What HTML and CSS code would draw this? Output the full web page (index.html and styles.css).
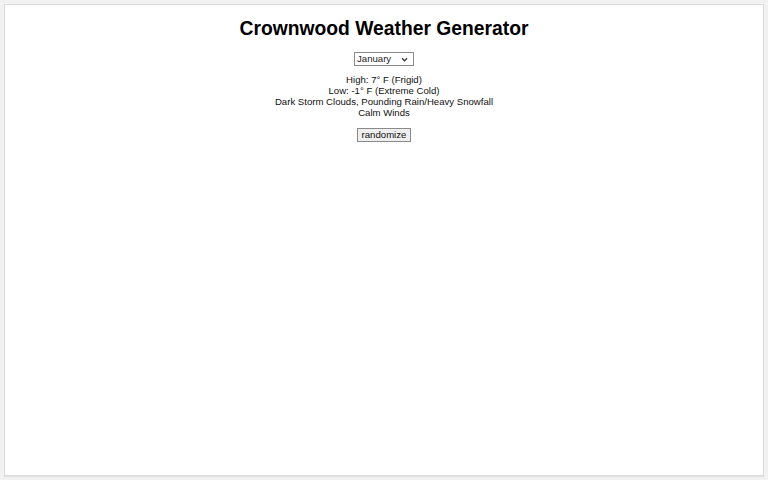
FILE: index.html
```html
<!DOCTYPE html>
<html>
<head>
<meta charset="utf-8">
<link rel="stylesheet" href="styles.css">
</head>
<body>
<div class="panel">
  <h1 class="title">Crownwood Weather Generator</h1>
  <select class="month">
    <option>January</option>
    <option>February</option>
    <option>March</option>
    <option>April</option>
    <option>May</option>
    <option>June</option>
    <option>July</option>
    <option>August</option>
    <option>September</option>
    <option>October</option>
    <option>November</option>
    <option>December</option>
  </select>
  <div class="report">
    <div>High: 7° F (Frigid)</div>
    <div>Low: -1° F (Extreme Cold)</div>
    <div>Dark Storm Clouds, Pounding Rain/Heavy Snowfall</div>
    <div>Calm Winds</div>
  </div>
  <button class="randomize">randomize</button>
</div>
</body>
</html>
```
FILE: styles.css
```css
html, body {
  margin: 0;
  padding: 0;
  height: 100%;
}
body {
  background: #f2f2f2;
  padding: 4px;
  box-sizing: border-box;
  font-family: "Liberation Sans", Arial, sans-serif;
}
.panel {
  box-sizing: border-box;
  height: 100%;
  background: #fff;
  border: 1px solid #dcdcdc;
  box-shadow: 0 1px 1px rgba(0, 0, 0, 0.06);
  display: flex;
  flex-direction: column;
  align-items: center;
  padding-top: 12px;
}
.title {
  margin: 0;
  font-size: 19.3px;
  font-weight: bold;
  color: #000;
  line-height: 23px;
}
.month {
  appearance: none;
  -webkit-appearance: none;
  margin-top: 12px;
  font-family: "Liberation Sans", Arial, sans-serif;
  font-size: 9.6px;
  color: #222;
  width: 60px;
  height: 14px;
  padding: 0 0 0 2px;
  border: 1px solid #8a8a8a;
  border-radius: 0;
  background-color: #fff;
  background-image: url("data:image/svg+xml,%3Csvg xmlns='http://www.w3.org/2000/svg' width='8' height='6' viewBox='0 0 8 6'%3E%3Cpath d='M1 1.5 L4 4.5 L7 1.5' fill='none' stroke='%23333' stroke-width='1.5'/%3E%3C/svg%3E");
  background-repeat: no-repeat;
  background-position: right 5px center;
  background-size: 7px 5px;
  line-height: 12px;
}
.report {
  margin-top: 8px;
  font-size: 9.6px;
  line-height: 11px;
  text-align: center;
  color: #111;
}
.randomize {
  margin-top: 10px;
  font-family: "Liberation Sans", Arial, sans-serif;
  font-size: 9.6px;
  color: #111;
  height: 14px;
  padding: 0 4px;
  border: 1px solid #8a8a8a;
  background: #efefef;
  border-radius: 0;
  line-height: 12px;
}
```
